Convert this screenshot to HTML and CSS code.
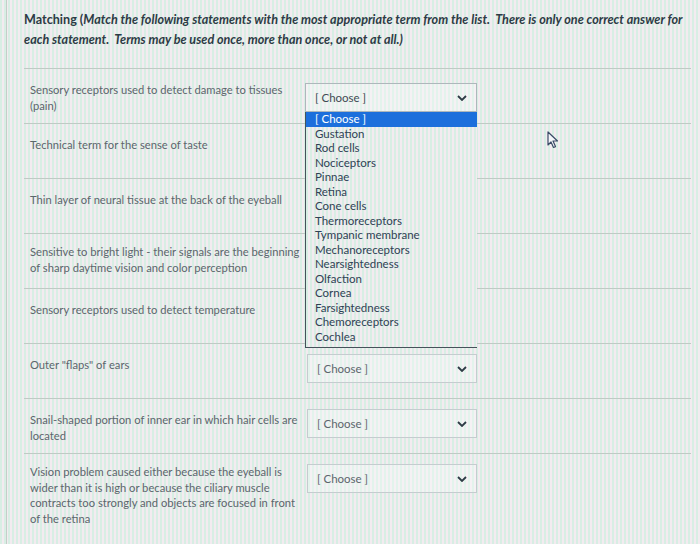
FILE: index.html
```html
<!DOCTYPE html>
<html>
<head>
<meta charset="utf-8">
<link rel="stylesheet" href="styles.css">
</head>
<body>
<div class="page">
  <div class="header">
    <p>Matching (<span class="em">Match the following statements with the most appropriate term from the list.&nbsp; There is only one correct answer for</span></p>
    <p class="em">each statement.&nbsp; Terms may be used once, more than once, or not at all.)</p>
  </div>
  <div class="rows">
    <div class="row">
      <div class="stmt">Sensory receptors used to detect damage to tissues (pain)</div>
      <div class="cell first">
        <div class="select focus"><span>[ Choose ]</span><svg class="chev" viewBox="0 0 10 6" width="10" height="6"><path d="M1 1 L5 5 L9 1" fill="none" stroke="#2d3b45" stroke-width="1.8"/></svg></div>
        <ul class="list">
          <li class="sel">[ Choose ]</li>
          <li>Gustation</li>
          <li>Rod cells</li>
          <li>Nociceptors</li>
          <li>Pinnae</li>
          <li>Retina</li>
          <li>Cone cells</li>
          <li>Thermoreceptors</li>
          <li>Tympanic membrane</li>
          <li>Mechanoreceptors</li>
          <li>Nearsightedness</li>
          <li>Olfaction</li>
          <li>Cornea</li>
          <li>Farsightedness</li>
          <li>Chemoreceptors</li>
          <li>Cochlea</li>
        </ul>
      </div>
    </div>
    <div class="row"><div class="stmt">Technical term for the sense of taste</div><div class="cell"></div></div>
    <div class="row"><div class="stmt">Thin layer of neural tissue at the back of the eyeball</div><div class="cell"></div></div>
    <div class="row tight"><div class="stmt">Sensitive to bright light - their signals are the beginning of sharp daytime vision and color perception</div><div class="cell"></div></div>
    <div class="row"><div class="stmt">Sensory receptors used to detect temperature</div><div class="cell"></div></div>
    <div class="row"><div class="stmt">Outer "flaps" of ears</div><div class="cell"><div class="select"><span>[ Choose ]</span><svg class="chev" viewBox="0 0 10 6" width="10" height="6"><path d="M1 1 L5 5 L9 1" fill="none" stroke="#2d3b45" stroke-width="1.8"/></svg></div></div></div>
    <div class="row"><div class="stmt">Snail-shaped portion of inner ear in which hair cells are located</div><div class="cell"><div class="select"><span>[ Choose ]</span><svg class="chev" viewBox="0 0 10 6" width="10" height="6"><path d="M1 1 L5 5 L9 1" fill="none" stroke="#2d3b45" stroke-width="1.8"/></svg></div></div></div>
    <div class="row last"><div class="stmt">Vision problem caused either because the eyeball is wider than it is high or because the ciliary muscle contracts too strongly and objects are focused in front of the retina</div><div class="cell"><div class="select"><span>[ Choose ]</span><svg class="chev" viewBox="0 0 10 6" width="10" height="6"><path d="M1 1 L5 5 L9 1" fill="none" stroke="#2d3b45" stroke-width="1.8"/></svg></div></div></div>
  </div>
  <svg class="cursor" viewBox="0 0 12 18" width="12" height="18"><path d="M1 1 L1 14 L4 11 L6.5 16.5 L8.5 15.6 L6 10 L10.5 10 Z" fill="#f4f6fa" stroke="#3a4a66" stroke-width="1.2" stroke-linejoin="round"/></svg>
</div>
</body>
</html>
```

FILE: styles.css
```css
html, body {
  margin: 0;
  padding: 0;
}
body {
  width: 700px;
  height: 544px;
  overflow: hidden;
  font-family: Lato, "Open Sans", sans-serif;
  background-color: #e8f1ec;
  background-image: repeating-linear-gradient(90deg, #d8eee4 0px, #d8eee4 2px, #f3ebf0 2px, #f3ebf0 4px);
}
.page {
  position: relative;
  height: 544px;
  border-left: 1px solid #c3cfc8;
  margin-left: 6px;
  box-sizing: border-box;
}
.header {
  padding: 10px 0 0 17px;
  height: 68px;
  box-sizing: border-box;
  color: #2d3b45;
}
.header p {
  margin: 0;
  font-size: 12.6px;
  line-height: 20px;
  font-weight: 700;
  white-space: nowrap;
}
.header .em {
  font-style: italic;
}
.rows {
  margin-left: 17px;
  width: 667px;
}
.row {
  display: flex;
  height: 55px;
  box-sizing: border-box;
  border-top: 1px solid #bfcac4;
}
.row.last {
  height: 92px;
}
.stmt {
  width: 281px;
  padding: 13px 0 0 6px;
  box-sizing: border-box;
  font-size: 11.2px;
  line-height: 15.5px;
  color: #5c666c;
}
.row.tight .stmt {
  padding-top: 10px;
}
.row.last .stmt {
  padding-top: 10px;
}
.cell {
  position: relative;
  padding: 10px 0 0 2px;
}
.cell.first {
  padding: 14px 0 0 0;
}
.select {
  width: 170px;
  height: 29px;
  box-sizing: border-box;
  border: 1px solid #c5cccf;
  background: rgba(250, 252, 251, 0.35);
  display: flex;
  align-items: center;
  justify-content: space-between;
  padding: 0 9px 0 9px;
  font-size: 11.5px;
  color: #5c666c;
}
.select.focus {
  width: 172px;
  border-color: #aeb7bb;
  color: #3f4a52;
}
.chev {
  display: block;
}
.list {
  position: absolute;
  left: 0;
  top: 43px;
  width: 172px;
  margin: 0;
  padding: 0 0 3px 0;
  list-style: none;
  box-sizing: border-box;
  border-left: 1px solid #46525a;
  border-bottom: 1px solid #46525a;
  background-color: #e8f1ec;
  background-image: repeating-linear-gradient(90deg, #d8eee4 0px, #d8eee4 2px, #f3ebf0 2px, #f3ebf0 4px);
}
.list li {
  height: 14.5px;
  line-height: 14.5px;
  padding-left: 9px;
  font-size: 11.5px;
  color: #2e4253;
}
.list li.sel {
  background: #1c6fdc;
  color: #ffffff;
}
.cursor {
  position: absolute;
  left: 540px;
  top: 131px;
}
```
